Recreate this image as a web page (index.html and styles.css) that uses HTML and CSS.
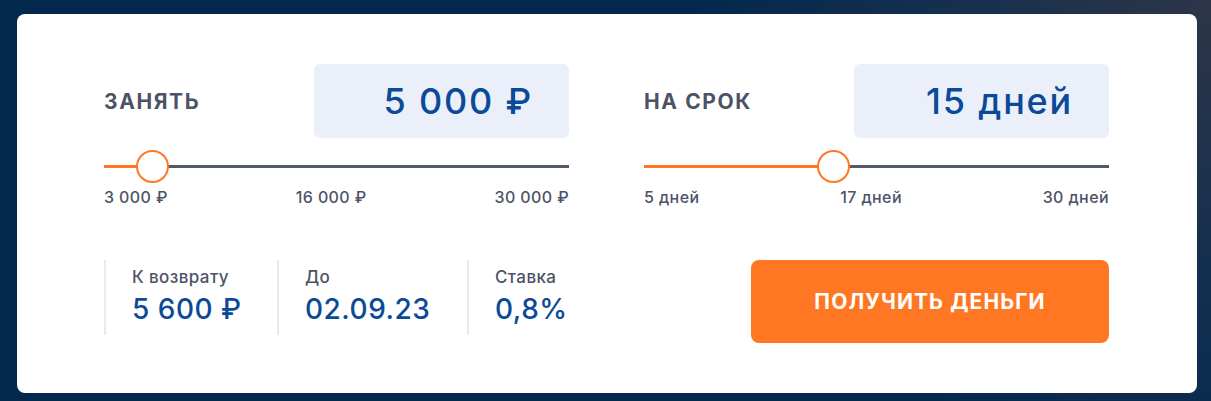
FILE: index.html
```html
<!DOCTYPE html>
<html lang="ru">
<head>
<meta charset="utf-8">
<title>Калькулятор займа</title>
<link rel="stylesheet" href="styles.css">
</head>
<body>
<div class="card">
  <div class="sliders">
    <div class="col">
      <div class="head">
        <div class="label">ЗАНЯТЬ</div>
        <div class="box">5 000 ₽</div>
      </div>
      <div class="track">
        <div class="fill" style="width:10.3%"></div>
        <div class="thumb" style="left:10.3%"></div>
      </div>
      <div class="ticks">
        <span>3 000 ₽</span><span>16 000 ₽</span><span>30 000 ₽</span>
      </div>
    </div>
    <div class="col">
      <div class="head">
        <div class="label">НА СРОК</div>
        <div class="box">15 дней</div>
      </div>
      <div class="track">
        <div class="fill" style="width:40.6%"></div>
        <div class="thumb" style="left:40.6%"></div>
      </div>
      <div class="ticks">
        <span>5 дней</span><span>17 дней</span><span>30 дней</span>
      </div>
    </div>
  </div>
  <div class="bottom">
    <div class="stats">
      <div class="stat s1"><div class="st-label">К возврату</div><div class="st-value">5 600 ₽</div></div>
      <div class="stat s2"><div class="st-label">До</div><div class="st-value">02.09.23</div></div>
      <div class="stat s3"><div class="st-label">Ставка</div><div class="st-value">0,8%</div></div>
    </div>
    <button class="btn">ПОЛУЧИТЬ ДЕНЬГИ</button>
  </div>
</div>
</body>
</html>
```
FILE: styles.css
```css
* { box-sizing: border-box; }
html, body { margin: 0; height: 100%; }
body {
  background: radial-gradient(circle at 100% 0, #2d3548 0, #15304f 260px, #03284e 520px);
  background-color: #03284e;
  padding: 14px 14px 8px 17px;
  font-family: Inter, "Noto Sans", sans-serif;
}
.card {
  width: 1180px;
  height: 379px;
  background: #fff;
  border-radius: 8px;
  padding: 50px 88px 0 87px;
}
.sliders {
  display: flex;
  gap: 75px;
}
.col { width: 465px; }
.head {
  display: flex;
  justify-content: space-between;
  align-items: center;
  height: 74px;
}
.label {
  font-size: 21px;
  font-weight: 700;
  color: #4d5366;
  letter-spacing: 1.6px;
}
.box {
  width: 255px;
  height: 74px;
  background: #eaeff9;
  border-radius: 6px;
  display: flex;
  align-items: center;
  justify-content: flex-end;
  padding-right: 36px;
  font-size: 36px;
  font-weight: 500;
  color: #0b4a97;
  letter-spacing: 1.8px;
}
.track {
  position: relative;
  height: 3px;
  background: #52596b;
  margin-top: 27px;
}
.fill {
  height: 3px;
  background: #ff7722;
}
.thumb {
  position: absolute;
  top: -15px;
  width: 33px;
  height: 33px;
  margin-left: -16px;
  border: 2px solid #ff7722;
  border-radius: 50%;
  background: #fff;
}
.ticks {
  display: flex;
  justify-content: space-between;
  margin-top: 19px;
  font-size: 16px;
  font-weight: 500;
  color: #4d5366;
  line-height: 21px;
  letter-spacing: 0.4px;
}
.bottom {
  display: flex;
  justify-content: space-between;
  margin-top: 52px;
}
.stats {
  display: flex;
  height: 75px;
}
.stat {
  border-left: 2px solid #e6eaf6;
  padding-left: 26px;
  padding-top: 6px;
}
.s1 { width: 173px; }
.s2 { width: 190px; }
.s3 { width: 120px; }
.st-label {
  font-size: 17px;
  font-weight: 500;
  color: #4d5366;
  line-height: 22px;
  letter-spacing: 0.4px;
}
.st-value {
  font-size: 28px;
  font-weight: 500;
  color: #0b4a97;
  line-height: 36px;
  margin-top: 3px;
  letter-spacing: 0.5px;
}
.btn {
  width: 358px;
  height: 83px;
  border: 0;
  border-radius: 8px;
  background: #ff7722;
  color: #fff;
  font-family: inherit;
  font-size: 21px;
  font-weight: 700;
  letter-spacing: 1.1px;
}
```
